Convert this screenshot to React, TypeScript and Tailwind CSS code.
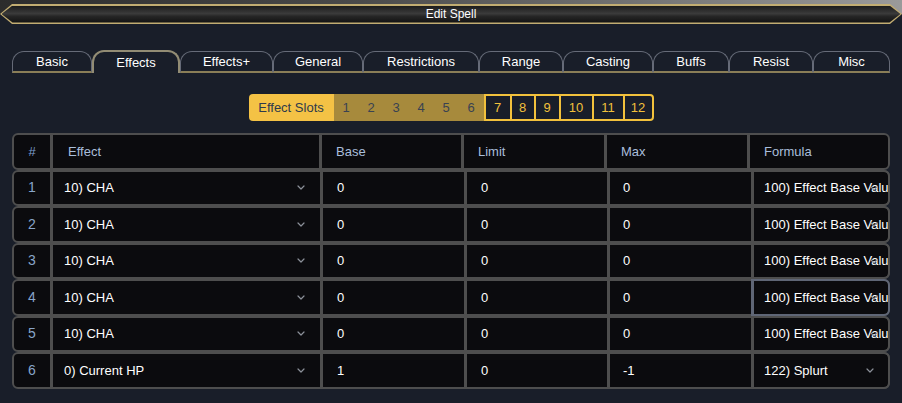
import React from 'react';

const tabs = [
  { label: 'Basic', w: 80 },
  { label: 'Effects', w: 88, active: true },
  { label: 'Effects+', w: 93 },
  { label: 'General', w: 90 },
  { label: 'Restrictions', w: 116 },
  { label: 'Range', w: 84 },
  { label: 'Casting', w: 90 },
  { label: 'Buffs', w: 76 },
  { label: 'Resist', w: 84 },
  { label: 'Misc', w: 77 },
];

const filledSlots = ['1', '2', '3', '4', '5', '6'];
const openSlots = [
  { n: '7', w: 'w-[24px]' },
  { n: '8', w: 'w-[24px]' },
  { n: '9', w: 'w-[25px]' },
  { n: '10', w: 'w-[33px]' },
  { n: '11', w: 'w-[31px]' },
  { n: '12', w: 'w-[29px]' },
];

const rows = [
  { effect: '10) CHA', base: '0', limit: '0', max: '0', formula: '100) Effect Base Value', chevron: false },
  { effect: '10) CHA', base: '0', limit: '0', max: '0', formula: '100) Effect Base Value', chevron: false },
  { effect: '10) CHA', base: '0', limit: '0', max: '0', formula: '100) Effect Base Value', chevron: false },
  { effect: '10) CHA', base: '0', limit: '0', max: '0', formula: '100) Effect Base Value', chevron: false, focus: true },
  { effect: '10) CHA', base: '0', limit: '0', max: '0', formula: '100) Effect Base Value', chevron: false },
  { effect: '0) Current HP', base: '1', limit: '0', max: '-1', formula: '122) Splurt', chevron: true },
];

const Chevron: React.FC<{ className?: string }> = ({ className }) => (
  <svg className={className} width="8" height="5" viewBox="0 0 8 5" fill="none">
    <path d="M1 1l3 3 3-3" stroke="#8b9099" strokeWidth="1.2" strokeLinecap="round" strokeLinejoin="round" />
  </svg>
);

const TitleBar: React.FC = () => (
  <div className="h-[26px] pt-[4px] bg-[linear-gradient(to_right,#2c2c2c,#4a4a4a_40%,#9a9a9a)] bg-no-repeat bg-[length:100%_14px]">
    <div className="h-[20px] bg-[#c2ad72] [clip-path:polygon(0_50%,12px_0,calc(100%-12px)_0,100%_50%,calc(100%-12px)_100%,12px_100%)] p-[1.5px]">
      <div className="h-full flex items-center justify-center bg-[linear-gradient(to_bottom,#1c1c1c,#3b3b3b_45%,#262626_60%,#121212)] [clip-path:polygon(0_50%,11px_0,calc(100%-11px)_0,100%_50%,calc(100%-11px)_100%,11px_100%)]">
        <span className="text-[12px] text-white leading-none">Edit Spell</span>
      </div>
    </div>
  </div>
);

const Tabs: React.FC = () => (
  <div className="flex items-end mt-[24px] px-[12px] h-[23px]">
    {tabs.map((t) =>
      t.active ? (
        <div
          key={t.label}
          style={{ width: t.w }}
          className="h-[23px] rounded-t-[12px] border-2 border-b-0 border-[#928c74] flex items-center justify-center text-[13px] text-white pt-[1px]"
        >
          {t.label}
        </div>
      ) : (
        <div
          key={t.label}
          style={{ width: t.w }}
          className="h-[22px] rounded-t-[12px] border border-[#666b78] border-b-2 border-b-[#8a7e57] flex items-center justify-center text-[13px] text-white"
        >
          {t.label}
        </div>
      )
    )}
  </div>
);

const SlotBar: React.FC = () => (
  <div className="flex justify-center mt-[21px]">
    <div className="flex h-[27px] text-[13px]">
      <div className="w-[85px] flex items-center justify-center bg-[#f4c245] text-[#2e3a4c] rounded-l-[4px]">Effect Slots</div>
      {filledSlots.map((s) => (
        <div key={s} className="w-[25px] flex items-center justify-center bg-[#a78a3c] text-[#394252]">
          {s}
        </div>
      ))}
      <div className="flex border-2 border-[#f2c13c] rounded-r-[4px]">
        {openSlots.map((s, i) => (
          <div
            key={s.n}
            className={`${s.w} flex items-center justify-center text-[#f2c13c] ${i > 0 ? 'border-l-2 border-[#f2c13c]' : ''}`}
          >
            {s.n}
          </div>
        ))}
      </div>
    </div>
  </div>
);

const HeaderRow: React.FC = () => (
  <div className="flex h-[36.5px] rounded-[6px] border-2 border-[#4e4e4e] bg-[#0b0b0e] overflow-hidden text-[13px] text-[#a9bedb]">
    <div className="w-[36px] flex items-center justify-center text-[#7f9fcf]">#</div>
    <div className="w-[269px] border-l-[3px] border-[#4e4e4e] flex items-center pl-[15px]">Effect</div>
    <div className="w-[142px] border-l-[3px] border-[#4e4e4e] flex items-center pl-[14px]">Base</div>
    <div className="w-[143px] border-l-[3px] border-[#4e4e4e] flex items-center pl-[14px]">Limit</div>
    <div className="w-[143px] border-l-[3px] border-[#4e4e4e] flex items-center pl-[14px]">Max</div>
    <div className="flex-1 border-l-[3px] border-[#4e4e4e] flex items-center pl-[14px]">Formula</div>
  </div>
);

const DataRow: React.FC<{ idx: number; row: (typeof rows)[number] }> = ({ idx, row }) => (
  <div className="flex h-[36.5px] rounded-[6px] border-2 border-[#4e4e4e] bg-[#0b0b0e] text-[13px] text-white">
    <div className="w-[36px] flex items-center justify-center text-[#88a5c9] text-[14px]">{idx}</div>
    <div className="w-[270px] border-l-[3px] border-[#4e4e4e] flex items-center justify-between pl-[11px] pr-[15px]">
      <span>{row.effect}</span>
      <Chevron />
    </div>
    <div className="w-[144px] border-l-[3px] border-[#4e4e4e] flex items-center pl-[14px]">{row.base}</div>
    <div className="w-[143px] border-l-[3px] border-[#4e4e4e] flex items-center pl-[14px]">{row.limit}</div>
    <div className="w-[144px] border-l-[3px] border-[#4e4e4e] flex items-center pl-[13px]">{row.max}</div>
    <div
      className={`flex-1 -my-[2px] -mr-[2px] border-2 border-l-[3px] rounded-r-[6px] flex items-center pl-[10px] overflow-hidden relative ${
        row.focus ? 'border-[#5f6676]' : 'border-[#4e4e4e]'
      }`}
    >
      <span className="whitespace-nowrap">{row.formula}</span>
      {row.chevron ? (
        <Chevron className="absolute right-[14px] top-[14px]" />
      ) : (
        <Chevron className="absolute right-[10px] top-[14px]" />
      )}
    </div>
  </div>
);

export default function App() {
  return (
    <div className="w-[902px] h-[403px] bg-[#191e29] overflow-hidden font-['Liberation_Sans',Arial,sans-serif]">
      <TitleBar />
      <Tabs />
      <SlotBar />
      <div className="mt-[12px] px-[12px] flex flex-col">
        <HeaderRow />
        {rows.map((r, i) => (
          <DataRow key={i} idx={i + 1} row={r} />
        ))}
      </div>
    </div>
  );
}
